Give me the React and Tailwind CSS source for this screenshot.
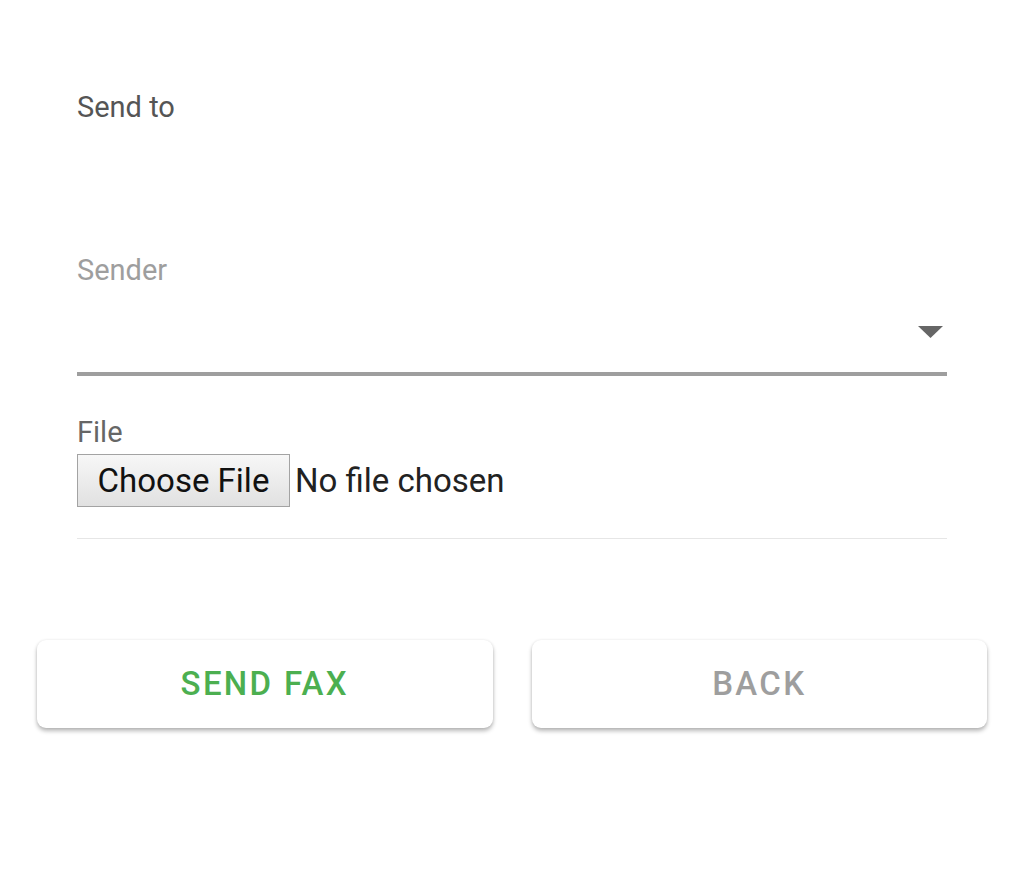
export default function App() {
  return (
    <div className="min-h-[870px] bg-white pt-[90px] font-['Roboto',sans-serif]">
      <div className="px-[77px]">
        <div className="text-[29px] leading-[34px] text-[#555]">Send to</div>

        <div className="mt-[129px] text-[29px] leading-[34px] text-[#9e9e9e]">Sender</div>
        <div className="flex h-[89px] items-center justify-end border-b-4 border-[#9e9e9e] pt-[4px]">
          <svg width="25" height="12" viewBox="0 0 25 12" className="mr-[4px]">
            <polygon points="0,0 25,0 12.5,12" fill="#666" />
          </svg>
        </div>

        <div className="mt-[39px] text-[29px] leading-[34px] text-[#666]">File</div>
        <div className="mt-[5px] flex items-center">
          <span className="flex h-[53px] w-[213px] items-center justify-center border border-[#a3a3a3] bg-gradient-to-b from-[#f7f7f7] to-[#e1e1e1] text-[33px] text-[#111]">
            Choose File
          </span>
          <span className="ml-[5px] text-[33px] text-[#222]">No file chosen</span>
        </div>
        <div className="mt-[31px] border-b border-[#e6e6e6]" />
      </div>

      <div className="mt-[101px] flex gap-[39px] px-[37px]">
        <button className="flex h-[88px] flex-1 items-center justify-center rounded-[9px] bg-white text-[33px] font-medium tracking-[0.07em] text-[#4caf50] shadow-[0_3px_4px_rgba(0,0,0,0.28),0_0_3px_rgba(0,0,0,0.08)]">
          SEND FAX
        </button>
        <button className="flex h-[88px] flex-1 items-center justify-center rounded-[9px] bg-white text-[33px] font-medium tracking-[0.07em] text-[#9e9e9e] shadow-[0_3px_4px_rgba(0,0,0,0.28),0_0_3px_rgba(0,0,0,0.08)]">
          BACK
        </button>
      </div>
    </div>
  );
}
